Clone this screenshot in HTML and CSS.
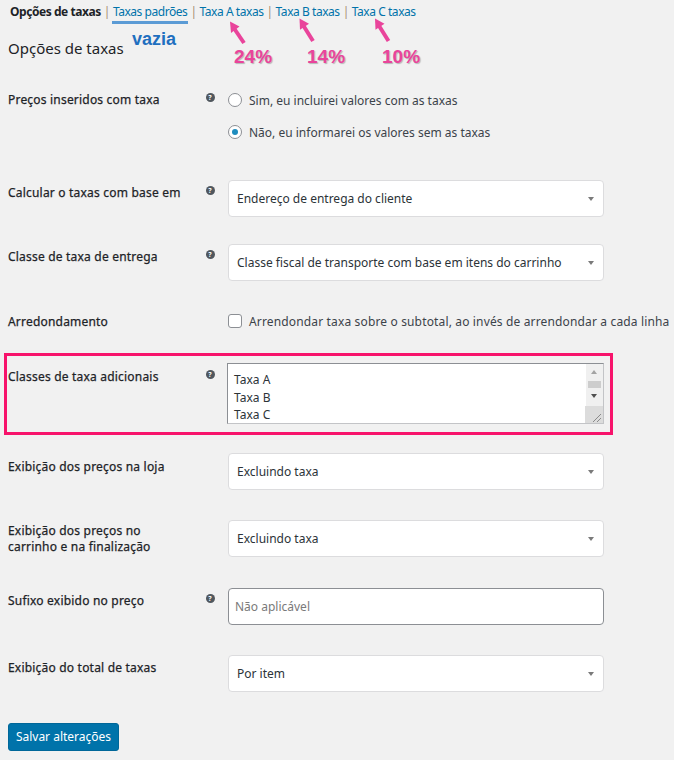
FILE: index.html
```html
<!DOCTYPE html>
<html lang="pt-BR">
<head>
<meta charset="utf-8">
<title>Opções de taxas</title>
<link rel="stylesheet" href="styles.css">
</head>
<body>
<div class="page">
  <nav class="subnav">
    <span class="subnav-current">Opções de taxas</span>
    <span class="sep">|</span>
    <a class="subnav-link" href="#">Taxas padrões</a>
    <span class="sep">|</span>
    <a class="subnav-link" href="#">Taxa A taxas</a>
    <span class="sep">|</span>
    <a class="subnav-link" href="#">Taxa B taxas</a>
    <span class="sep">|</span>
    <a class="subnav-link" href="#">Taxa C taxas</a>
  </nav>
  <h2 class="title">Opções de taxas</h2>

  <div class="annot-underline"></div>
  <div class="annot-vazia">vazia</div>
  <svg class="annot-arrows" width="674" height="70" viewBox="0 0 674 70">
    <g stroke="#e9449b" stroke-width="4" stroke-linecap="butt" fill="none">
      <line x1="244" y1="43" x2="233.5" y2="27.5"/>
      <line x1="313" y1="41" x2="303" y2="25"/>
      <line x1="388.5" y1="41" x2="378.5" y2="25"/>
    </g>
    <g fill="#e9449b">
      <polygon points="230,21.5 239.5,26.5 231,33"/>
      <polygon points="299.5,18.5 309,23.8 300,29.8"/>
      <polygon points="375,18.5 384.5,23.8 375.5,29.8"/>
    </g>
  </svg>
  <span class="annot-pct pct-a">24%</span>
  <span class="annot-pct pct-b">14%</span>
  <span class="annot-pct pct-c">10%</span>

  <form class="settings">
    <div class="row row-radio">
      <div class="row-label">Preços inseridos com taxa</div>
      <span class="help help-top">?</span>
      <div class="choices">
        <label class="choice"><span class="radio"></span>Sim, eu incluirei valores com as taxas</label>
        <label class="choice"><span class="radio radio-checked"></span>Não, eu informarei os valores sem as taxas</label>
      </div>
    </div>

    <div class="row row-after-radio">
      <div class="row-label">Calcular o taxas com base em</div>
      <span class="help">?</span>
      <div class="select"><span>Endereço de entrega do cliente</span></div>
    </div>

    <div class="row row-gap">
      <div class="row-label">Classe de taxa de entrega</div>
      <span class="help">?</span>
      <div class="select"><span>Classe fiscal de transporte com base em itens do carrinho</span></div>
    </div>

    <div class="row row-check">
      <div class="row-label row-label-check">Arredondamento</div>
      <span></span>
      <label class="choice choice-nowrap"><span class="checkbox"></span>Arrendondar taxa sobre o subtotal, ao invés de arrendondar a cada linha</label>
    </div>

    <div class="highlight">
      <div class="row">
        <div class="row-label row-label-list">Classes de taxa adicionais</div>
        <span class="help help-list">?</span>
        <div class="listbox">
          <div class="listbox-options">
            <div>Taxa A</div>
            <div>Taxa B</div>
            <div>Taxa C</div>
          </div>
          <div class="scrollbar">
            <span class="sb-up"></span>
            <span class="sb-thumb"></span>
            <span class="sb-down"></span>
            <svg class="sb-grip" width="18" height="17" viewBox="0 0 18 17">
              <rect x="0" y="0" width="18" height="17" fill="#dcdcdc"/>
              <line x1="16" y1="8" x2="8" y2="16" stroke="#8a8a8a" stroke-width="1"/>
              <line x1="16" y1="12" x2="12" y2="16" stroke="#8a8a8a" stroke-width="1"/>
            </svg>
          </div>
        </div>
      </div>
    </div>

    <div class="row row-after-box">
      <div class="row-label row-label-sel">Exibição dos preços na loja</div>
      <span></span>
      <div class="select"><span>Excluindo taxa</span></div>
    </div>

    <div class="row row-gap2">
      <div class="row-label row-label-two">Exibição dos preços no carrinho e na finalização</div>
      <span></span>
      <div class="select"><span>Excluindo taxa</span></div>
    </div>

    <div class="row row-gap3">
      <div class="row-label">Sufixo exibido no preço</div>
      <span class="help help-input">?</span>
      <div class="text-input">Não aplicável</div>
    </div>

    <div class="row row-gap2">
      <div class="row-label">Exibição do total de taxas</div>
      <span></span>
      <div class="select"><span>Por item</span></div>
    </div>

    <button type="button" class="btn-primary">Salvar alterações</button>
  </form>
</div>
</body>
</html>
```

FILE: styles.css
```css
html, body {
  margin: 0;
  padding: 0;
}

body {
  background: #f1f1f1;
  font-family: "Noto Sans", "Open Sans", sans-serif;
  font-size: 12px;
  color: #3c434a;
}

.page {
  position: relative;
  width: 674px;
  height: 760px;
  padding-left: 8px;
  box-sizing: border-box;
  overflow: hidden;
}

/* sub navigation */
.subnav {
  display: flex;
  align-items: center;
  height: 20px;
  padding-top: 2px;
  padding-left: 2px;
  line-height: 20px;
  white-space: nowrap;
}

.subnav-current {
  font-weight: 700;
  color: #1d2327;
  letter-spacing: -0.45px;
}

.subnav-link {
  color: #0073aa;
  text-decoration: none;
  letter-spacing: -0.45px;
}

.sep {
  color: #a58d72;
  margin: 0 2.5px 0 3px;
}

.title {
  margin: 15.5px 0 0;
  font-size: 15px;
  font-weight: 400;
  line-height: 20px;
  color: #1d2327;
}

/* annotations (overlay) */
.annot-underline {
  position: absolute;
  left: 112px;
  top: 21px;
  width: 76px;
  height: 3px;
  background: #5b9bd5;
}

.annot-vazia {
  position: absolute;
  left: 132px;
  top: 30px;
  font-family: "Liberation Sans", Arial, sans-serif;
  font-weight: 700;
  font-size: 18px;
  line-height: 18px;
  color: #1f6fbf;
}

.annot-arrows {
  position: absolute;
  left: 0;
  top: 0;
}

.annot-pct {
  position: absolute;
  top: 47px;
  font-family: "Liberation Sans", Arial, sans-serif;
  font-weight: 700;
  font-size: 19px;
  line-height: 19px;
  color: #e9449b;
  text-shadow: 1px 1px 1px rgba(0, 0, 0, 0.25);
}

.pct-a { left: 234px; }
.pct-b { left: 307px; }
.pct-c { left: 382px; }

/* form */
.settings {
  margin-top: 32.5px;
}

.row {
  display: grid;
  grid-template-columns: 197px 23px 376px;
  align-items: start;
}

.row-after-radio { margin-top: 38px; }
.row-gap { margin-top: 27px; }
.row-check { margin-top: 30px; }
.row-after-box { margin-top: 18px; }
.row-gap2 { margin-top: 30px; }
.row-gap3 { margin-top: 31px; }

.row-label {
  color: #1d2327;
  line-height: 20px;
  padding-top: 3px;
  letter-spacing: 0.2px;
  -webkit-text-stroke: 0.25px #1d2327;
}

.row-radio .row-label { padding-top: 0; }
.row-label-check { padding-top: 1px; }
.row-label-list { padding-top: 4px; }
.row-label-sel { padding-top: 4px; }

.row-label-two {
  line-height: 16px;
  padding-top: 3px;
  padding-right: 40px;
}

.help {
  display: block;
  width: 9px;
  height: 9px;
  margin-top: 5.5px;
  margin-left: 0.5px;
  border-radius: 50%;
  background: #50575e;
  color: #fff;
  font-size: 7px;
  font-weight: 700;
  line-height: 9px;
  text-align: center;
}

.help-top { margin-top: 3px; }
.help-list { margin-top: 6.5px; }
.help-input { margin-top: 6px; }

.choices {
  display: flex;
  flex-direction: column;
  gap: 12px;
}

.choice {
  display: flex;
  align-items: center;
  gap: 7px;
  height: 20px;
  color: #3c434a;
}

.choice-nowrap {
  white-space: nowrap;
  letter-spacing: 0.15px;
}

.radio {
  position: relative;
  flex: none;
  width: 14px;
  height: 14px;
  box-sizing: border-box;
  border: 1px solid #8c8f94;
  border-radius: 50%;
  background: #fff;
}

.radio-checked::before {
  content: "";
  position: absolute;
  left: 3px;
  top: 3px;
  width: 6px;
  height: 6px;
  border-radius: 50%;
  background: #1e8cbe;
}

.checkbox {
  flex: none;
  width: 14px;
  height: 14px;
  box-sizing: border-box;
  border: 1px solid #8c8f94;
  border-radius: 3px;
  background: #fff;
}

.select {
  display: flex;
  align-items: center;
  justify-content: space-between;
  height: 37px;
  box-sizing: border-box;
  padding: 0 9px 0 8px;
  background: #fff;
  border: 1px solid #dcdcde;
  border-radius: 4px;
  color: #2c3338;
  white-space: nowrap;
}

.select::after {
  content: "";
  flex: none;
  width: 0;
  height: 0;
  border-left: 3.5px solid transparent;
  border-right: 3.5px solid transparent;
  border-top: 4px solid #7a7a7a;
  margin-left: 8px;
}

.text-input {
  height: 37px;
  box-sizing: border-box;
  padding: 0 6px;
  display: flex;
  align-items: center;
  background: #fff;
  border: 1px solid #8c8f94;
  border-radius: 4px;
  color: #7a7a7a;
}

/* highlighted listbox block */
.highlight {
  margin-top: 21px;
  margin-left: -4px;
  width: 609px;
  box-sizing: border-box;
  padding: 7px 0 8px 1px;
  border: 3px solid #f7136b;
}

.listbox {
  display: flex;
  margin-left: -1px;
  width: 377px;
  height: 61px;
  box-sizing: border-box;
  background: #fff;
  border: 1px solid #8c8f94;
  border-right-color: #c3c4c7;
  border-bottom-color: #c3c4c7;
}

.listbox-options {
  flex: 1;
  padding: 7px 0 0 6px;
  line-height: 17.5px;
  color: #2c3338;
}

.scrollbar {
  position: relative;
  width: 17px;
  background: #f0f0f0;
}

.sb-up {
  position: absolute;
  left: 5px;
  top: 6px;
  width: 0;
  height: 0;
  border-left: 3.5px solid transparent;
  border-right: 3.5px solid transparent;
  border-bottom: 4px solid #a3a3a3;
}

.sb-thumb {
  position: absolute;
  left: 2px;
  top: 17px;
  width: 13px;
  height: 7px;
  background: #cdcdcd;
}

.sb-down {
  position: absolute;
  left: 5px;
  top: 30px;
  width: 0;
  height: 0;
  border-left: 3.5px solid transparent;
  border-right: 3.5px solid transparent;
  border-top: 4px solid #505050;
}

.sb-grip {
  position: absolute;
  right: 0;
  bottom: 0;
}

.btn-primary {
  display: block;
  margin-top: 31px;
  width: 111px;
  height: 28px;
  padding: 0;
  background: #0073aa;
  border: 1px solid #006799;
  border-radius: 3px;
  color: #fff;
  font-family: "Noto Sans", "Open Sans", sans-serif;
  font-size: 12px;
  line-height: 26px;
  text-align: center;
}
```
